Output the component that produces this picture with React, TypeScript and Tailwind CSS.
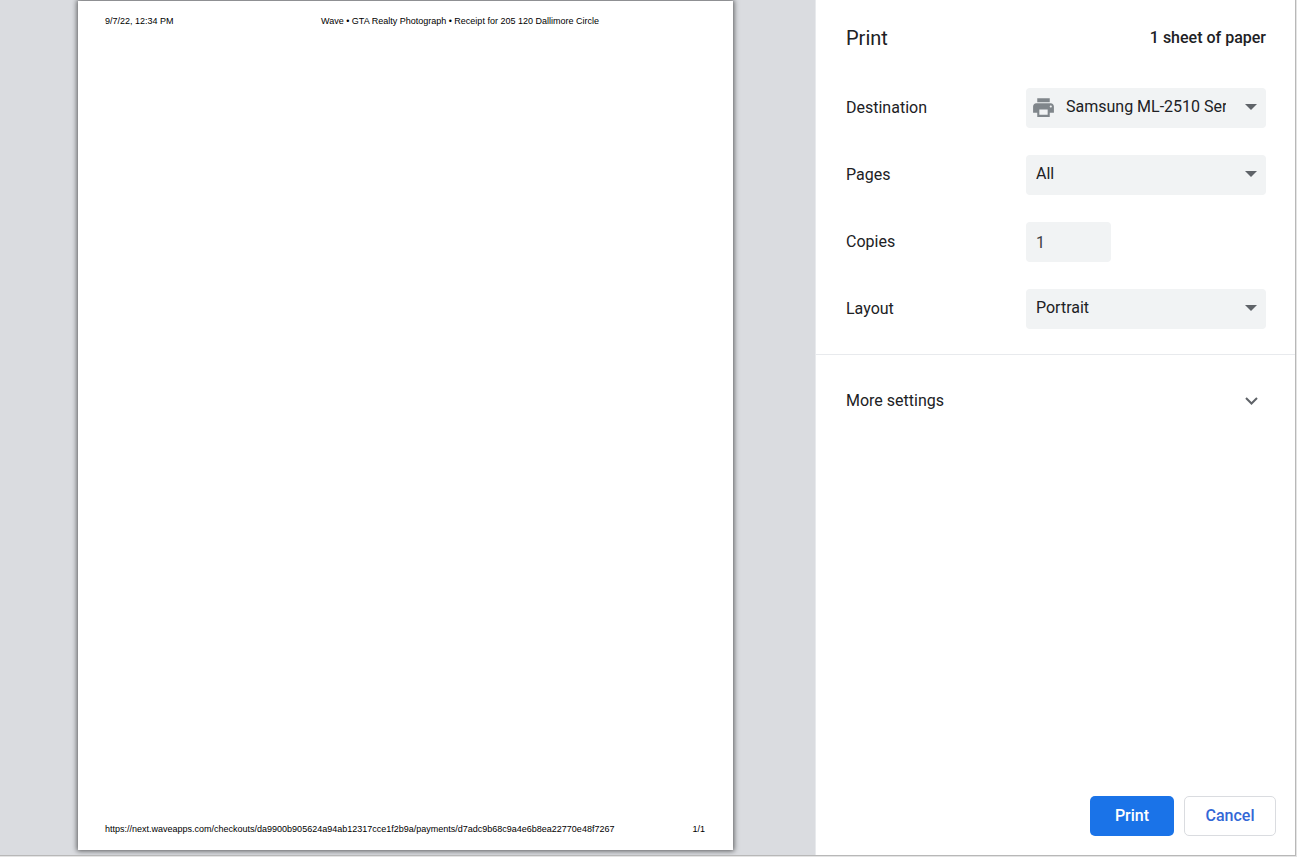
import type { ReactNode } from 'react';
import { useState } from 'react';

const RECEIPT_URL =
  'https://next.waveapps.com/checkouts/da9900b905624a94ab12317cce1f2b9a/payments/d7adc9b68c9a4e6b8ea22770e48f7267';

function PrinterIcon() {
  return (
    <svg viewBox="0 0 24 24" className="size-[25px]" fill="#80868b" aria-hidden="true">
      <path d="M19 8H5c-1.66 0-3 1.34-3 3v6h4v4h12v-4h4v-6c0-1.66-1.34-3-3-3zm-3 11H8v-5h8v5zm3-7c-.55 0-1-.45-1-1s.45-1 1-1 1 .45 1 1-.45 1-1 1zm-1-9H6v4h12V3z" />
    </svg>
  );
}

interface ISelectFieldProps {
  id: string;
  options: string[];
  icon?: ReactNode;
}

function SelectField({ id, options, icon }: ISelectFieldProps) {
  const [value, setValue] = useState(options[0]);

  return (
    <div className="relative w-60">
      {icon && <span className="absolute left-[5px] top-[7px] pointer-events-none">{icon}</span>}
      <select
        id={id}
        value={value}
        onChange={(e) => setValue(e.target.value)}
        className={`block w-full h-10 pr-10 pb-[2px] appearance-none rounded bg-[#f1f3f4] text-[#202124] outline-none
          ${icon ? 'pl-10' : 'pl-[10px]'}`}
      >
        {options.map((option) => (
          <option key={option}>{option}</option>
        ))}
      </select>
      <svg viewBox="0 0 12 6" className="absolute right-[9px] top-4 w-3 h-[6px] pointer-events-none" fill="#5f6368" aria-hidden="true">
        <path d="M0 0h12L6 6z" />
      </svg>
    </div>
  );
}

function SettingsRow({ id, label, children }: { id: string; label: string; children: ReactNode }) {
  return (
    <div className="flex items-center">
      <label htmlFor={id} className="w-[180px] shrink-0">{label}</label>
      {children}
    </div>
  );
}

function Preview() {
  return (
    <section className="flex-1 min-w-0 flex bg-[#dadce0] pl-[78px] pr-[82px] pt-px pb-[5px]">
      <div className="flex-1 min-w-0 flex flex-col justify-between bg-white pl-[27px] pr-7 pt-[14px] pb-[15px] shadow-[0_0_5px_1px_rgba(0,0,0,0.6)] font-['Liberation_Sans',Arial,sans-serif] text-[9px] leading-3 text-black">
        <header className="flex">
          <span className="w-[216px] shrink-0">9/7/22, 12:34 PM</span>
          <span>Wave • GTA Realty Photograph • Receipt for 205 120 Dallimore Circle</span>
        </header>
        <footer className="flex justify-between">
          <span>{RECEIPT_URL}</span>
          <span>1/1</span>
        </footer>
      </div>
    </section>
  );
}

function Sidebar() {
  const [copies, setCopies] = useState('1');

  return (
    <aside className="w-[480px] shrink-0 flex flex-col bg-white border-l border-[#e8eaed]">
      <div className="flex items-center justify-between pl-[30px] pr-[29px] pt-6">
        <h1 className="text-xl leading-7">Print</h1>
        <span className="font-medium">1 sheet of paper</span>
      </div>

      <div className="flex flex-col gap-[27px] pl-[30px] pr-[29px] pt-9 pb-[25px] border-b border-[#e8eaed]">
        <SettingsRow id="destination" label="Destination">
          <SelectField id="destination" options={['Samsung ML-2510 Series', 'Save as PDF']} icon={<PrinterIcon />} />
        </SettingsRow>
        <SettingsRow id="pages" label="Pages">
          <SelectField id="pages" options={['All', 'Custom']} />
        </SettingsRow>
        <SettingsRow id="copies" label="Copies">
          <input
            id="copies"
            type="text"
            inputMode="numeric"
            value={copies}
            onChange={(e) => setCopies(e.target.value)}
            className="w-[85px] h-10 px-[10px] rounded bg-[#f1f3f4] text-[#3c4043] outline-none"
          />
        </SettingsRow>
        <SettingsRow id="layout" label="Layout">
          <SelectField id="layout" options={['Portrait', 'Landscape']} />
        </SettingsRow>
      </div>

      <button type="button" className="flex items-center justify-between h-[92px] pl-[30px] pr-[37px] text-left">
        More settings
        <svg viewBox="0 0 13 8" className="w-[13px] h-2" fill="none" stroke="#5f6368" strokeWidth="2" aria-hidden="true">
          <path d="M1 1l5.500 5.500L12 1" />
        </svg>
      </button>

      <div className="mt-auto flex justify-end gap-[10px] pr-[19px] pb-[19px] font-medium">
        <button type="button" className="w-[84px] h-10 rounded-[5px] bg-[#1a73e8] text-white">Print</button>
        <button type="button" className="w-[92px] h-10 rounded-[5px] border border-[#dadce0] text-[#3367d6]">Cancel</button>
      </div>
    </aside>
  );
}

export default function App() {
  return (
    <div className="h-screen bg-[#e4e4e4] pr-px pb-px">
      <main className="h-full flex overflow-hidden border-r border-b border-[#b8b8b8] font-[Roboto,sans-serif] text-base leading-5 text-[#202124]">
        <Preview />
        <Sidebar />
      </main>
    </div>
  );
}
